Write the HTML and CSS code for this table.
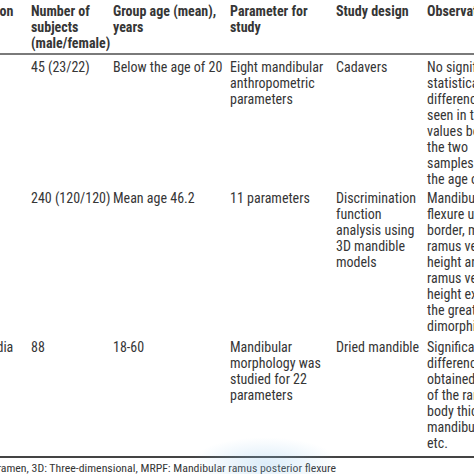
FILE: index.html
```html
<!DOCTYPE html>
<html>
<head>
<meta charset="utf-8">
<link rel="stylesheet" href="styles.css">
</head>
<body>
<div class="sheet">
  <table class="data">
    <colgroup>
      <col class="c0"><col class="c1"><col class="c2"><col class="c3"><col class="c4"><col class="c5">
    </colgroup>
    <thead>
      <tr>
        <th class="loc-head">Location</th>
        <th>Number of subjects (male/female)</th>
        <th>Group age (mean), years</th>
        <th>Parameter for study</th>
        <th>Study design</th>
        <th>Observation</th>
      </tr>
    </thead>
    <tbody>
      <tr>
        <td></td>
        <td>45 (23/22)</td>
        <td>Below the age of 20</td>
        <td>Eight mandibular anthropometric parameters</td>
        <td>Cadavers</td>
        <td class="obs">No significant<br>statistical<br>difference was<br>seen in the<br>values between<br>the two<br>samples below<br>the age of 20</td>
      </tr>
      <tr>
        <td></td>
        <td>240 (120/120)</td>
        <td>Mean age 46.2</td>
        <td>11 parameters</td>
        <td>Discrimination function analysis using 3D mandible models</td>
        <td class="obs">Mandibular<br>flexure upper<br>border, maximum<br>ramus vertical<br>height and<br>ramus vertical<br>height exhibit<br>the greatest<br>dimorphism</td>
      </tr>
      <tr>
        <td class="loc">South India</td>
        <td>88</td>
        <td>18-60</td>
        <td>Mandibular morphology was studied for 22 parameters</td>
        <td>Dried mandible</td>
        <td class="obs">Significant<br>difference was<br>obtained in all<br>of the ramus,<br>body thickness,<br>mandibular angle<br>etc.</td>
      </tr>
    </tbody>
  </table>
  <p class="note">MF: Mental foramen, 3D: Three-dimensional, MRPF: Mandibular ramus posterior flexure</p>
  <div class="mark"></div>
</div>
</body>
</html>
```
FILE: styles.css
```css
html, body {
  margin: 0;
  padding: 0;
  background: #ffffff;
  overflow: hidden;
  width: 474px;
  height: 474px;
}
.sheet {
  position: relative;
  margin-left: -60px;
  width: 620px;
  font-family: "Roboto", "Liberation Sans", sans-serif;
  font-stretch: 83%;
  color: #363636;
}
.data {
  border-collapse: collapse;
  table-layout: fixed;
  width: 607px;
  margin-top: 1px;
  font-size: 14px;
  line-height: 16px;
}
.c0 { width: 91px; }
.c1 { width: 82px; }
.c2 { width: 117px; }
.c3 { width: 106px; }
.c4 { width: 91px; }
.c5 { width: 120px; }
.data th {
  text-align: left;
  vertical-align: top;
  font-weight: bold;
  padding: 2px 2px 2px 0;
  border-bottom: 2px solid #7a7a7a;
}
.data td {
  vertical-align: top;
  padding: 3px 2px 0 0;
}
.data tbody tr:first-child td {
  padding-top: 4px;
}
.data th.loc-head {
  padding-left: 25px;
}
.data td.loc {
  padding-left: 11px;
}
.data tbody tr:last-child td {
  border-bottom: 2px solid #444444;
  padding-top: 5px;
  padding-bottom: 5px;
}
.obs { white-space: nowrap; }
.note {
  margin: 3px 0 0 -7px;
  font-size: 11.8px;
  line-height: 15px;
}
.mark {
  position: absolute;
  left: 250px;
  top: 436px;
  width: 150px;
  height: 44px;
  background: radial-gradient(ellipse at 50% 60%, rgba(140, 195, 235, 0.3), rgba(140, 195, 235, 0) 70%);
  pointer-events: none;
}
```
